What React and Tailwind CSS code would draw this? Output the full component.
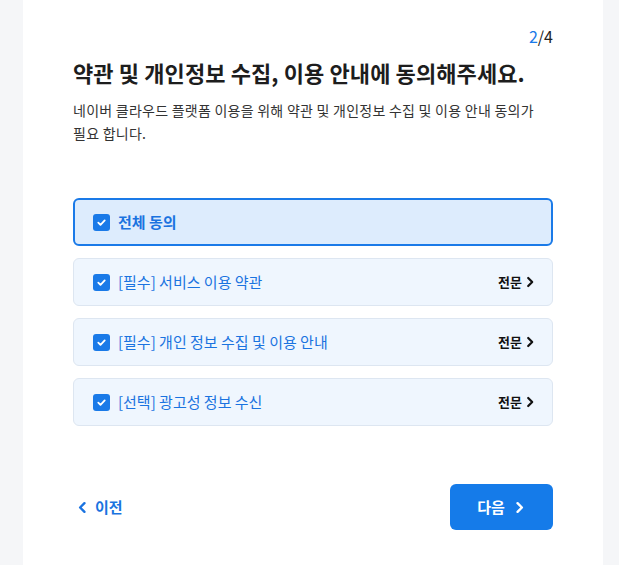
import React from "react";

const Check = () => (
  <span className="flex h-[17px] w-[17px] shrink-0 items-center justify-center rounded-[3px] bg-[#1a7ae8]">
    <svg width="11" height="11" viewBox="0 0 12 12" fill="none">
      <path d="M2.5 6.2l2.4 2.4 4.6-4.8" stroke="white" strokeWidth="2" strokeLinecap="round" strokeLinejoin="round" />
    </svg>
  </span>
);

const Chevron = ({ dir = "right", color = "currentColor", size = 12, sw = 2 }) => (
  <svg width={size} height={size} viewBox="0 0 12 12" fill="none">
    {dir === "right" ? (
      <path d="M4.2 2l4 4-4 4" stroke={color} strokeWidth={sw} strokeLinecap="round" strokeLinejoin="round" />
    ) : (
      <path d="M7.8 2l-4 4 4 4" stroke={color} strokeWidth={sw} strokeLinecap="round" strokeLinejoin="round" />
    )}
  </svg>
);

const Item = ({ label }) => (
  <div className="flex h-[48px] items-center justify-between rounded-[6px] border border-[#dde6f1] bg-[#eff6fe] pl-[19px] pr-[16px]">
    <div className="flex items-center gap-[8px]">
      <Check />
      <span className="text-[15px] text-[#1a73e0]">{label}</span>
    </div>
    <div className="flex items-center gap-[2px] text-[13px] font-bold text-[#111]">
      <span>전문</span>
      <Chevron size={12} sw={2.2} color="#111" />
    </div>
  </div>
);

export default function App() {
  return (
    <div
      className="flex min-h-[565px] bg-[#f5f6f8] pl-[23px]"
      style={{ fontFamily: '"Noto Sans CJK KR", "Noto Sans", sans-serif' }}
    >
      <div className="w-[580px] bg-white px-[50px] pt-[24px]">
        <div className="text-right text-[16px] leading-[24px] text-[#222]">
          <span className="text-[#1a7ae8]">2</span>/4
        </div>
        <h1 className="mt-[9px] text-[22px] font-bold leading-[30px] tracking-[0.1px] text-[#1d1d1d]">
          약관 및 개인정보 수집, 이용 안내에 동의해주세요.
        </h1>
        <p className="mt-[12px] text-[14px] leading-[23px] tracking-[0.25px] text-[#333]">
          네이버 클라우드 플랫폼 이용을 위해 약관 및 개인정보 수집 및 이용 안내 동의가
          <br />
          필요 합니다.
        </p>
        <div className="mt-[53px] flex flex-col gap-[12px]">
          <div className="flex h-[48px] items-center rounded-[6px] border-2 border-[#1a7ae8] bg-[#ddecfd] pl-[18px]">
            <div className="flex items-center gap-[8px]">
              <Check />
              <span className="text-[15px] font-bold text-[#1a73e0]">전체 동의</span>
            </div>
          </div>
          <Item label="[필수] 서비스 이용 약관" />
          <Item label="[필수] 개인 정보 수집 및 이용 안내" />
          <Item label="[선택] 광고성 정보 수신" />
        </div>
        <div className="mt-[58px] flex items-center justify-between pb-[35px]">
          <button className="flex items-center gap-[6px] pl-[3px] text-[15px] font-bold text-[#1a73e0]">
            <Chevron dir="left" size={13} sw={2.2} color="#1a73e0" />
            <span>이전</span>
          </button>
          <button className="flex h-[46px] w-[103px] items-center justify-center gap-[8px] rounded-[6px] bg-[#157be9] text-[15px] font-bold text-white">
            <span>다음</span>
            <Chevron size={13} sw={2.2} color="white" />
          </button>
        </div>
      </div>
    </div>
  );
}
